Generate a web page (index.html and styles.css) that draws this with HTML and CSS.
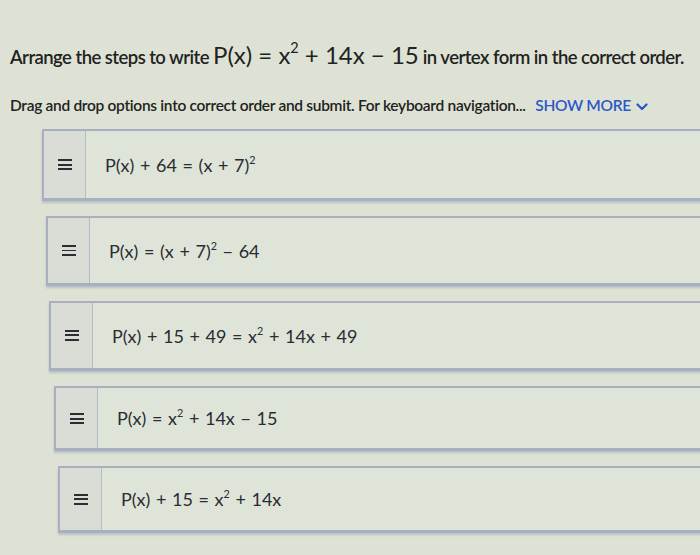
FILE: index.html
```html
<!DOCTYPE html>
<html lang="en">
<head>
<meta charset="utf-8">
<title>Vertex form ordering</title>
<link rel="stylesheet" href="styles.css">
</head>
<body>
<div class="page">
  <h1 class="question">Arrange the steps to write <span class="math big">P(x) = x<sup>2</sup> + 14x − 15</span> in vertex form in the correct order.</h1>
  <p class="instructions">Drag and drop options into correct order and submit. For keyboard navigation... <a class="more" href="#">SHOW MORE <svg class="chev" viewBox="0 0 12 8" width="12" height="8"><path d="M1.5 1.5 L6 6 L10.5 1.5" fill="none" stroke="currentColor" stroke-width="2.2" stroke-linecap="round" stroke-linejoin="round"/></svg></a></p>
  <ul class="list">
    <li class="card c1"><div class="handle"><span class="bars"></span></div><div class="expr"><span>P(x) + 64 = (x + 7)<sup>2</sup></span></div></li>
    <li class="card c2"><div class="handle"><span class="bars"></span></div><div class="expr"><span>P(x) = (x + 7)<sup>2</sup> − 64</span></div></li>
    <li class="card c3"><div class="handle"><span class="bars"></span></div><div class="expr"><span>P(x) + 15 + 49 = x<sup>2</sup> + 14x + 49</span></div></li>
    <li class="card c4"><div class="handle"><span class="bars"></span></div><div class="expr"><span>P(x) = x<sup>2</sup> + 14x − 15</span></div></li>
    <li class="card c5"><div class="handle"><span class="bars"></span></div><div class="expr"><span>P(x) + 15 = x<sup>2</sup> + 14x</span></div></li>
  </ul>
</div>
</body>
</html>
```
FILE: styles.css
```css
* { box-sizing: border-box; }
html, body { margin: 0; padding: 0; }
body {
  background: #dde2d5;
  font-family: Lato, "Open Sans", sans-serif;
  color: #222;
  width: 700px;
  height: 555px;
  overflow: hidden;
}
.page { padding: 37px 0 0 0; }
.question {
  margin: 0 0 0 10px;
  font-size: 18.5px;
  font-weight: 600;
  letter-spacing: -0.55px;
  line-height: 36px;
  white-space: nowrap;
}
.math { font-weight: 400; letter-spacing: 0; }
.math.big { font-size: 24px; }
.math sup, .expr sup { font-size: 0.6em; vertical-align: 0.75em; line-height: 0; }
.instructions {
  margin: 20px 0 0 10px;
  font-size: 15.5px;
  font-weight: 600;
  letter-spacing: -0.3px;
  white-space: nowrap;
  line-height: 20px;
}
.more { color: #2b56c9; text-decoration: none; margin-left: 6px; }
.chev { margin-left: 2px; vertical-align: 0px; }
.list {
  list-style: none;
  margin: 14px 0 0 0;
  padding: 0;
  display: flex;
  flex-direction: column;
  gap: 15px;
}
.card {
  display: flex;
  height: 72px;
  margin-right: -20px;
  border: 2px solid #a6b0c0;
  border-bottom-width: 3px;
  background: #dfe4d9;
  box-shadow: 0 2px 2px rgba(120, 130, 160, 0.35);
}
.c1 { margin-left: 42px; }
.c2 { margin-left: 46px; height: 70px; }
.c3 { margin-left: 49px; height: 70px; }
.c4 { margin-left: 54px; height: 65px; }
.c5 { margin-left: 58px; height: 67px; }
.handle {
  width: 42px;
  flex: none;
  display: flex;
  align-items: center;
  justify-content: center;
  border-right: 1px solid #b4bcc8;
  background: #d9ddd6;
}
.bars {
  width: 14px;
  height: 11px;
  background: linear-gradient(#2a2d33 0 2px, transparent 2px 4.5px, #2a2d33 4.5px 6.5px, transparent 6.5px 9px, #2a2d33 9px 11px);
}
.expr {
  display: flex;
  align-items: center;
  padding-left: 19px;
  font-size: 18px;
  word-spacing: 1px;
  color: #2a2c31;
  white-space: nowrap;
}
```
